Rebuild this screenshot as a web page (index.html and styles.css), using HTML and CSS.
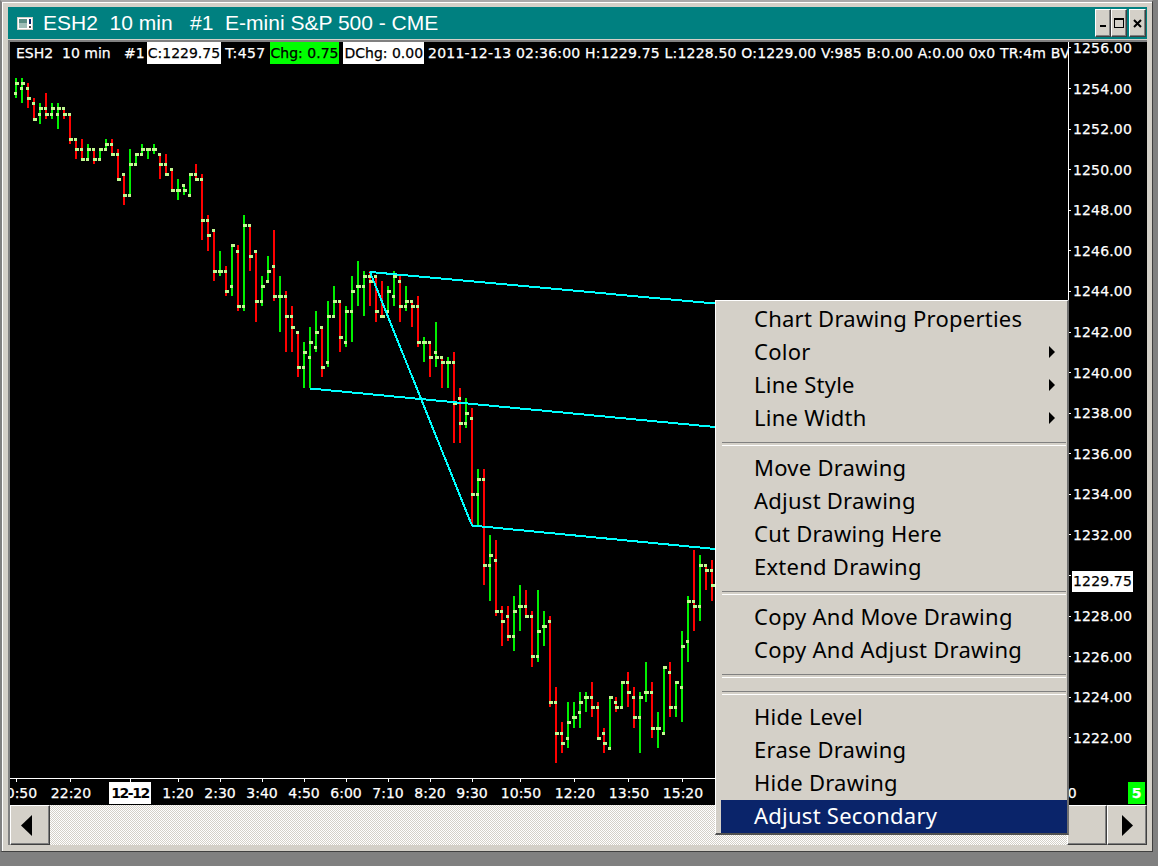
FILE: index.html
```
<!DOCTYPE html>
<html lang="en">
<head>
<meta charset="utf-8">
<title>ESH2 10 min #1 E-mini S&amp;P 500 - CME</title>
<link rel="stylesheet" href="styles.css">
</head>
<body>
<div class="window">
  <div class="frame">
    <header class="titlebar">
      <svg class="app-icon" width="16" height="13" viewBox="0 0 16 13">
        <rect width="16" height="13" fill="#d4d0c8"/>
        <rect x="1" y="1" width="14" height="11" fill="#fff"/>
        <rect x="2" y="2" width="8" height="9" fill="#5a8f86"/>
        <rect x="2" y="6" width="8" height="5" fill="#9fbfb8"/>
        <rect x="12" y="2" width="2" height="5" fill="#0a246a"/>
        <rect x="12" y="9" width="2" height="2" fill="#404040"/>
      </svg>
      <span class="title-text">ESH2  10 min   #1  E-mini S&amp;P 500 - CME</span>
      <div class="win-buttons">
        <button class="win-btn"><svg width="8" height="8" viewBox="0 0 8 8"><rect x="1" y="6" width="6" height="2" fill="#000"/></svg></button>
        <button class="win-btn"><svg width="10" height="10" viewBox="0 0 10 10"><path d="M0 0H10V10H0ZM1 2V9H9V2Z" fill="#000" fill-rule="evenodd"/></svg></button>
        <button class="win-btn win-close"><svg width="9" height="9" viewBox="0 0 9 9"><path d="M1 1L8 8M8 1L1 8" stroke="#000" stroke-width="2" fill="none"/></svg></button>
      </div>
    </header>
    <div class="client">
      <div class="chart">
        <div class="chart-top">
          <div class="plot">
            <svg id="plot-svg" class="plot-svg" width="1058" height="736" viewBox="10 42 1058 736">
              <g id="bars"></g>
              <g class="trend">
                <path d="M370 272L715 303.5"/>
                <path d="M310 388.5L715 427"/>
                <path d="M472 525.5L715 549"/>
                <path d="M370 272L472 525.5"/>
              </g>
            </svg>
            <div class="legend">
              <span class="legend-name">ESH2  10 min   #1</span>
              <span class="tag-white legend-close">C:1229.75</span>
              <span class="legend-ticks">T:457</span>
              <span class="tag-green legend-chg">Chg: 0.75</span>
              <span class="tag-white legend-dchg">DChg: 0.00</span>
              <span class="legend-rest">2011-12-13 02:36:00 H:1229.75 L:1228.50 O:1229.00 V:985 B:0.00 A:0.00 0x0 TR:4m BV</span>
            </div>
          </div>
          <div class="price-axis">
            <div class="price-scale">
              <div class="price-row">1256.00</div>
              <div class="price-row">1254.00</div>
              <div class="price-row">1252.00</div>
              <div class="price-row">1250.00</div>
              <div class="price-row">1248.00</div>
              <div class="price-row">1246.00</div>
              <div class="price-row">1244.00</div>
              <div class="price-row">1242.00</div>
              <div class="price-row">1240.00</div>
              <div class="price-row">1238.00</div>
              <div class="price-row">1236.00</div>
              <div class="price-row">1234.00</div>
              <div class="price-row">1232.00</div>
              <div class="price-row"></div>
              <div class="price-row">1228.00</div>
              <div class="price-row">1226.00</div>
              <div class="price-row">1224.00</div>
              <div class="price-row">1222.00</div>
            </div>
            <div class="price-current">1229.75</div>
          </div>
        </div>
        <div class="time-axis">
          <span class="time-label" style="left:7px">20:50</span>
          <span class="time-label" style="left:61px">22:20</span>
          <span class="time-label time-date" style="left:120px">12-12</span>
          <span class="time-label" style="left:168px">1:20</span>
          <span class="time-label" style="left:210px">2:30</span>
          <span class="time-label" style="left:252px">3:40</span>
          <span class="time-label" style="left:294px">4:50</span>
          <span class="time-label" style="left:336px">6:00</span>
          <span class="time-label" style="left:378px">7:10</span>
          <span class="time-label" style="left:420px">8:20</span>
          <span class="time-label" style="left:462px">9:30</span>
          <span class="time-label" style="left:511px">10:50</span>
          <span class="time-label" style="left:565px">12:20</span>
          <span class="time-label" style="left:619px">13:50</span>
          <span class="time-label" style="left:673px">15:20</span>
          <span class="time-label" style="left:1051px">6:10</span>
          <span class="bar-count">5</span>
        </div>
      </div>
      <div class="scrollbar">
        <button class="scroll-btn"><svg class="arrow-left" width="11" height="21" viewBox="0 0 11 21"><path d="M11 0V21L0 10.5Z" fill="#000"/></svg></button>
        <div class="scroll-track"></div>
        <button class="scroll-btn"></button>
        <button class="scroll-btn"><svg width="11" height="21" viewBox="0 0 11 21"><path d="M0 0V21L11 10.5Z" fill="#000"/></svg></button>
      </div>
    </div>
  </div>
</div>
<nav class="menu">
  <div class="menu-item">Chart Drawing Properties</div>
  <div class="menu-item has-sub">Color</div>
  <div class="menu-item has-sub">Line Style</div>
  <div class="menu-item has-sub">Line Width</div>
  <div class="menu-sep"></div>
  <div class="menu-item">Move Drawing</div>
  <div class="menu-item">Adjust Drawing</div>
  <div class="menu-item">Cut Drawing Here</div>
  <div class="menu-item">Extend Drawing</div>
  <div class="menu-sep"></div>
  <div class="menu-item">Copy And Move Drawing</div>
  <div class="menu-item">Copy And Adjust Drawing</div>
  <div class="menu-sep"></div>
  <div class="menu-sep"></div>
  <div class="menu-item">Hide Level</div>
  <div class="menu-item">Erase Drawing</div>
  <div class="menu-item">Hide Drawing</div>
  <div class="menu-item is-active">Adjust Secondary</div>
</nav>
<script src="chart.js"></script>
</body>
</html>
```
FILE: styles.css
```
* { box-sizing: border-box; }
html, body { margin: 0; height: 100%; }
body { background: #808080; overflow: hidden; }

.window {
  width: 1153px;
  height: 852px;
  background: #d4d0c8;
  border-style: solid;
  border-width: 2px 1px 1px 2px;
  border-color: #a8a8a8 #404040 #404040 #808080;
}
.frame {
  height: 100%;
  border-top: 1px solid #fff;
  border-left: 1px solid #fff;
  padding: 4px 5px 6px 5px;
  display: flex;
  flex-direction: column;
}

.titlebar {
  height: 32px;
  flex: none;
  background: #008080;
  display: flex;
  align-items: center;
  padding-left: 9px;
  color: #fff;
}
.app-icon { flex: none; }
.title-text {
  margin-left: 10px;
  font: 21px "Liberation Sans", Arial, sans-serif;
  white-space: pre;
}
.win-buttons {
  margin-left: auto;
  display: flex;
  padding-right: 1px;
}
.win-btn {
  width: 16px;
  height: 28px;
  padding: 0;
  display: flex;
  align-items: center;
  justify-content: center;
  background: #d4d0c8;
  border: 1px solid;
  border-color: #fff #404040 #404040 #fff;
  box-shadow: inset -1px -1px 0 #808080;
}
.win-close { margin-left: 2px; width: 17px; }

.client {
  flex: 1;
  margin-top: 1px;
  border-top: 2px solid #808080;
  border-left: 2px solid #808080;
  display: flex;
  flex-direction: column;
}

.chart {
  height: 763px;
  flex: none;
  background: #000;
  color: #fff;
  font: 14px "DejaVu Sans", Verdana, sans-serif;
  -webkit-text-stroke: 0.25px currentColor;
}
.chart-top { height: 737px; display: flex; }
.plot {
  width: 1059px;
  flex: none;
  position: relative;
  overflow: hidden;
  border-right: 1px solid #fff;
  border-bottom: 1px solid #fff;
}
.plot-svg { position: absolute; left: 0; top: 0; display: block; }
.trend path { stroke: #00ffff; stroke-width: 2; fill: none; shape-rendering: crispEdges; }
.bar-red { fill: #ff0000; }
.bar-green { fill: #00f000; }
.bar-tick { fill: #c0fa90; }

.legend {
  position: relative;
  display: flex;
  gap: 4px;
  height: 22px;
  padding-left: 6px;
  line-height: 22px;
  white-space: pre;
}
.legend-name { margin-right: -2px; }
.tag-white { background: #fff; color: #000; padding: 0 1px; }
.tag-green { background: #00ff00; color: #000; padding: 0 1px; }
.legend-ticks { letter-spacing: 0.4px; }
.legend-chg { width: 70px; }
.legend-dchg { width: 82px; }
.legend-rest { letter-spacing: 0.19px; }

.price-axis { flex: 1; position: relative; overflow: hidden; }
.price-scale { margin-top: -14.3px; letter-spacing: 0.15px; }
.price-row {
  height: 40.59px;
  display: flex;
  align-items: center;
}
.price-row::before {
  content: "";
  width: 2px;
  height: 1px;
  margin-right: 2px;
  background: #fff;
}
.price-current {
  position: absolute;
  left: 3px;
  top: 529px;
  width: 61px;
  height: 21px;
  line-height: 21px;
  text-align: center;
  background: #fff;
  color: #000;
  letter-spacing: 0.15px;
}

.time-axis { height: 26px; position: relative; overflow: hidden; }
.time-tick {
  position: absolute;
  top: 0;
  width: 1px;
  height: 3px;
  background: #fff;
}
.time-label {
  position: absolute;
  top: 3px;
  height: 22px;
  line-height: 22px;
  white-space: nowrap;
  transform: translateX(-50%);
}
.time-date { background: #fff; color: #000; font-weight: bold; width: 42px; text-align: center; letter-spacing: -1.5px; -webkit-text-stroke: 0; }
.bar-count {
  position: absolute;
  left: 1118px;
  top: 3px;
  width: 17px;
  height: 22px;
  line-height: 22px;
  text-align: center;
  background: #00ff00;
  font-weight: bold;
}

.scrollbar { height: 40px; flex: none; display: flex; }
.scroll-btn {
  width: 40px;
  height: 40px;
  flex: none;
  padding: 0;
  display: flex;
  align-items: center;
  justify-content: center;
  background: #d4d0c8;
  border: 1px solid;
  border-color: #fff #404040 #404040 #fff;
  box-shadow: inset -1px -1px 0 #808080;
}
.arrow-left { margin-right: 8px; }
.scroll-track {
  flex: 1;
  background-color: #fff;
  background-image: conic-gradient(#d4d0c8 25%, #fff 0 50%, #d4d0c8 0 75%, #fff 0);
  background-size: 2px 2px;
}

.menu {
  position: absolute;
  left: 715px;
  top: 300px;
  width: 354px;
  height: 535px;
  padding: 2px 0 0 5px;
  background: #d4d0c8;
  color: #000;
  border-style: solid;
  border-width: 1px 2px 2px 1px;
  border-color: #fff #707070 #505050 #fff;
  font: 22px "Noto Sans", Tahoma, sans-serif;
  letter-spacing: 0.25px;
}
.menu-item {
  position: relative;
  height: 33px;
  line-height: 31px;
  padding-left: 33px;
  white-space: nowrap;
}
.has-sub::after {
  content: "";
  position: absolute;
  right: 12px;
  top: 10px;
  border-style: solid;
  border-width: 6px 0 6px 6px;
  border-color: transparent transparent transparent #000;
}
.is-active { background: #0a246a; color: #fff; }
.menu-sep { height: 17px; padding-top: 7px; margin: 0 1px 0 1px; }
.menu-sep::before {
  content: "";
  display: block;
  height: 2px;
  border-top: 1px solid #808080;
  border-bottom: 1px solid #fff;
}
```
FILE: chart.js
```
// [top, bottom, open tick y, close tick y, colour]; bars sit 6px apart from x=15
var data = [
[78,98,93,83,'g'],[78,103,88,83,'g'],[83,108,88,98,'r'],[98,121,103,119,'r'],[103,124,114,108,'g'],
[93,119,108,114,'r'],[103,119,114,108,'g'],[103,129,114,108,'g'],[107,119,108,114,'r'],[113,144,114,139,'r'],
[138,159,139,149,'r'],[139,158,149,159,'r'],[144,161,159,149,'g'],[149,164,149,159,'r'],[149,161,159,149,'g'],
[139,151,149,144,'g'],[139,156,144,154,'r'],[149,181,154,179,'r'],[173,205,174,195,'r'],[149,197,195,164,'g'],
[153,166,164,154,'g'],[144,156,154,149,'g'],[149,159,149,149,'g'],[144,154,149,149,'g'],[153,179,154,164,'r'],
[154,174,164,174,'r'],[168,192,169,190,'r'],[179,200,190,190,'g'],[184,195,185,190,'g'],[173,197,195,174,'g'],
[164,181,174,179,'r'],[174,240,179,220,'r'],[215,251,220,235,'r'],[229,281,230,271,'r'],[251,276,271,271,'g'],
[266,296,271,291,'r'],[245,296,286,245,'g'],[245,311,251,306,'r'],[215,311,306,225,'g'],[224,271,225,256,'r'],
[250,322,251,301,'r'],[276,306,301,286,'g'],[256,283,281,271,'g'],[230,301,266,296,'r'],[276,332,296,296,'g'],
[291,352,296,316,'r'],[306,352,316,327,'r'],[331,377,332,367,'r'],[342,388,367,352,'g'],[327,388,357,342,'g'],
[311,352,347,332,'g'],[326,377,327,367,'r'],[301,367,362,316,'g'],[286,316,316,301,'g'],[300,352,301,337,'r'],
[306,347,342,311,'g'],[276,342,311,291,'g'],[261,306,286,286,'g'],[271,316,286,276,'g'],[271,306,276,281,'r'],
[276,322,276,311,'r'],[281,318,316,316,'r'],[286,311,311,291,'g'],[271,306,296,276,'g'],[276,322,281,306,'r'],
[286,311,306,301,'g'],[301,327,301,306,'r'],[296,347,306,342,'r'],[337,362,342,342,'g'],[341,377,342,357,'r'],
[322,367,352,357,'g'],[357,388,357,362,'r'],[357,388,362,362,'g'],[352,443,362,403,'r'],[388,443,398,423,'r'],
[398,428,423,413,'g'],[408,526,418,494,'r'],[469,525,494,479,'g'],[469,585,479,565,'r'],[535,601,565,555,'g'],
[540,616,560,611,'r'],[606,646,611,621,'r'],[606,641,616,636,'r'],[596,651,636,611,'g'],[585,631,606,606,'g'],
[590,618,606,616,'r'],[611,667,616,656,'r'],[590,662,656,631,'g'],[611,646,626,626,'g'],[616,707,621,702,'r'],
[687,763,702,733,'r'],[722,753,733,743,'r'],[702,748,738,722,'g'],[702,728,717,717,'g'],[692,728,712,702,'g'],
[692,712,697,697,'g'],[682,717,697,707,'r'],[702,740,707,738,'r'],[728,753,733,743,'r'],[696,750,748,697,'g'],
[697,712,702,707,'r'],[681,709,707,682,'g'],[672,707,682,692,'r'],[687,728,697,717,'r'],[692,753,717,697,'g'],
[662,702,692,692,'g'],[682,738,692,728,'r'],[712,748,728,728,'g'],[666,735,733,667,'g'],[662,717,672,707,'r'],
[681,717,707,682,'g'],[631,722,687,646,'g'],[596,662,641,601,'g'],[550,631,601,606,'r'],[555,621,606,565,'g'],
[565,590,565,570,'r'],[560,601,570,585,'r']
];
var red = '', green = '', ticks = '';
data.forEach(function (d, i) {
  var x = 15 + 6 * i;
  var bar = 'M' + x + ' ' + d[0] + 'h2V' + d[1] + 'h-2z';
  if (d[4] === 'r') { red += bar; } else { green += bar; }
  ticks += 'M' + (x - 1) + ' ' + (d[2] - 1) + 'h3v3h-3z';
  ticks += 'M' + x + ' ' + (d[3] - 1) + 'h4v3h-4z';
});
var NS = 'http://www.w3.org/2000/svg';
var group = document.getElementById('bars');
[[red, 'bar-red'], [green, 'bar-green'], [ticks, 'bar-tick']].forEach(function (p) {
  var path = document.createElementNS(NS, 'path');
  path.setAttribute('d', p[0]);
  path.setAttribute('class', p[1]);
  path.setAttribute('shape-rendering', 'crispEdges');
  group.appendChild(path);
});
// ticks under the time axis
var tickXs = [6, 60, 120, 168, 210, 252, 294, 336, 378, 420, 462, 510, 564, 618, 672];
var axis = document.querySelector('.time-axis');
tickXs.forEach(function (x) {
  var t = document.createElement('i');
  t.className = 'time-tick';
  t.style.left = x + 'px';
  axis.appendChild(t);
});
```
